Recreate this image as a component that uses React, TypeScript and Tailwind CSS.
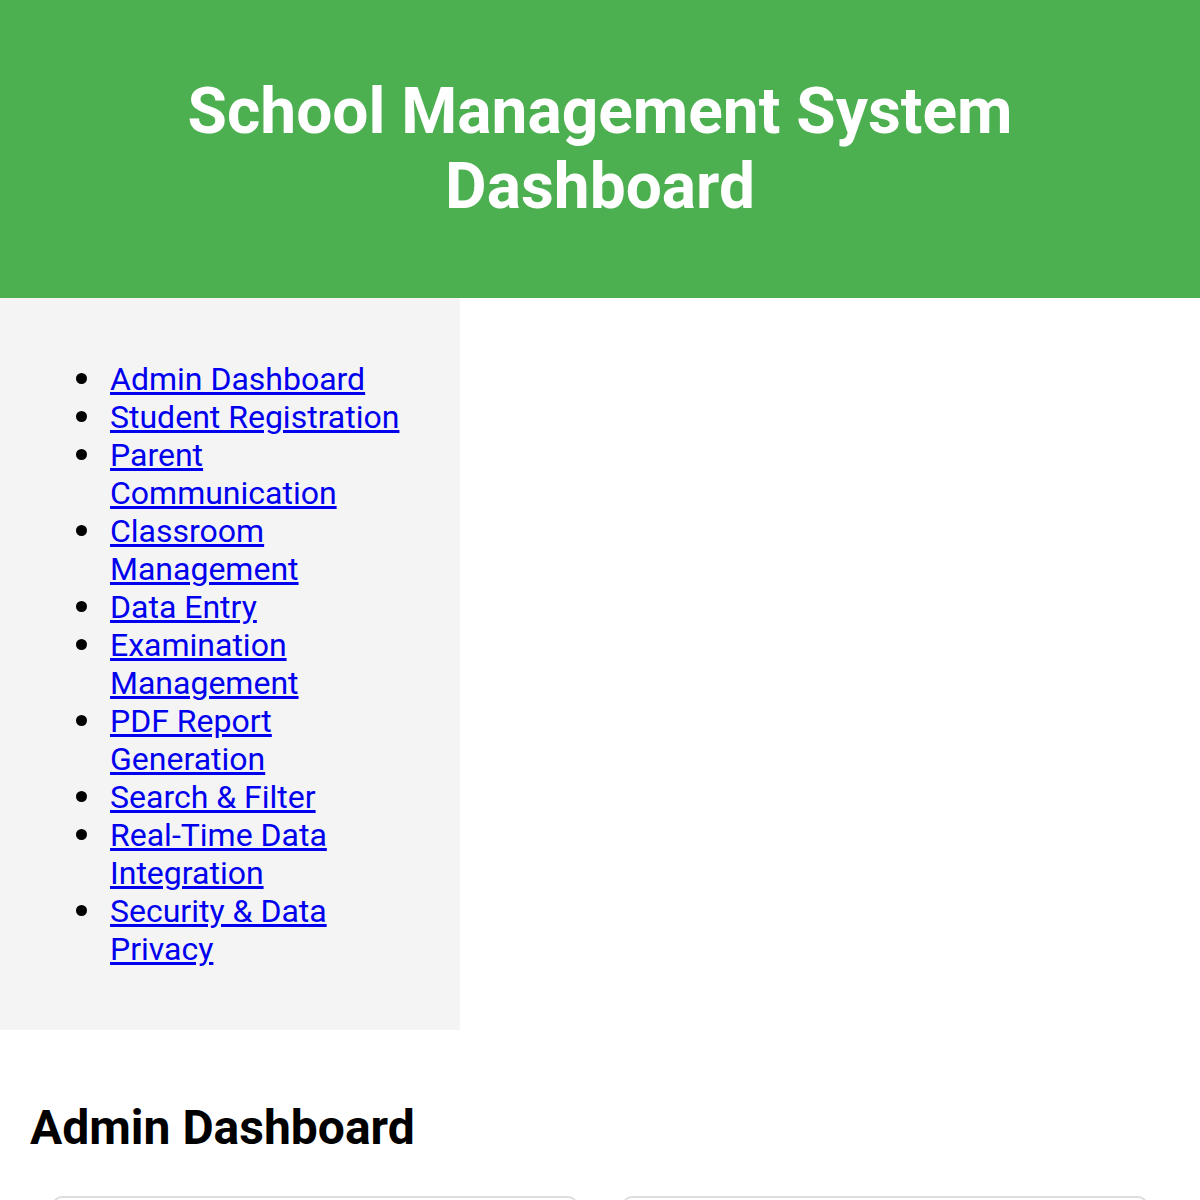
const navItems = [
  "Admin Dashboard",
  "Student Registration",
  "Parent Communication",
  "Classroom Management",
  "Data Entry",
  "Examination Management",
  "PDF Report Generation",
  "Search & Filter",
  "Real-Time Data Integration",
  "Security & Data Privacy",
];

const cards = [
  { title: "Total Students", value: "1,250" },
  { title: "Total Teachers", value: "85" },
];

export default function App() {
  return (
    <div className="min-h-screen bg-white font-['Roboto',sans-serif] text-black">
      <header className="bg-[#4caf50] px-[60px] py-[74px] text-center">
        <h1 className="text-[64px] font-bold leading-[75px] text-white">
          School Management System Dashboard
        </h1>
      </header>

      <div className="flex flex-wrap">
        <nav className="w-[460px] bg-[#f4f4f4] p-[30px]">
          <ul className="my-[32px] list-none pl-[80px] text-[32px] leading-[38px]">
            {navItems.map((item) => (
              <li
                key={item}
                className="relative before:absolute before:left-[-34px] before:top-[13px] before:size-[11px] before:rounded-full before:bg-black before:content-['']"
              >
                <a href="#" className="text-[#0000ee] underline">
                  {item}
                </a>
              </li>
            ))}
          </ul>
        </nav>

        <main className="w-full p-[30px]">
          <h2 className="my-[40px] text-[48px] font-bold leading-[56px]">
            Admin Dashboard
          </h2>
          <div className="grid grid-cols-2 gap-[44px] px-[22px]">
            {cards.map((card) => (
              <div
                key={card.title}
                className="rounded-[10px] border-2 border-[#dddddd] p-[30px]"
              >
                <h3 className="text-[36px] font-bold">{card.title}</h3>
                <p className="mt-[16px] text-[32px]">{card.value}</p>
              </div>
            ))}
          </div>
        </main>
      </div>
    </div>
  );
}
